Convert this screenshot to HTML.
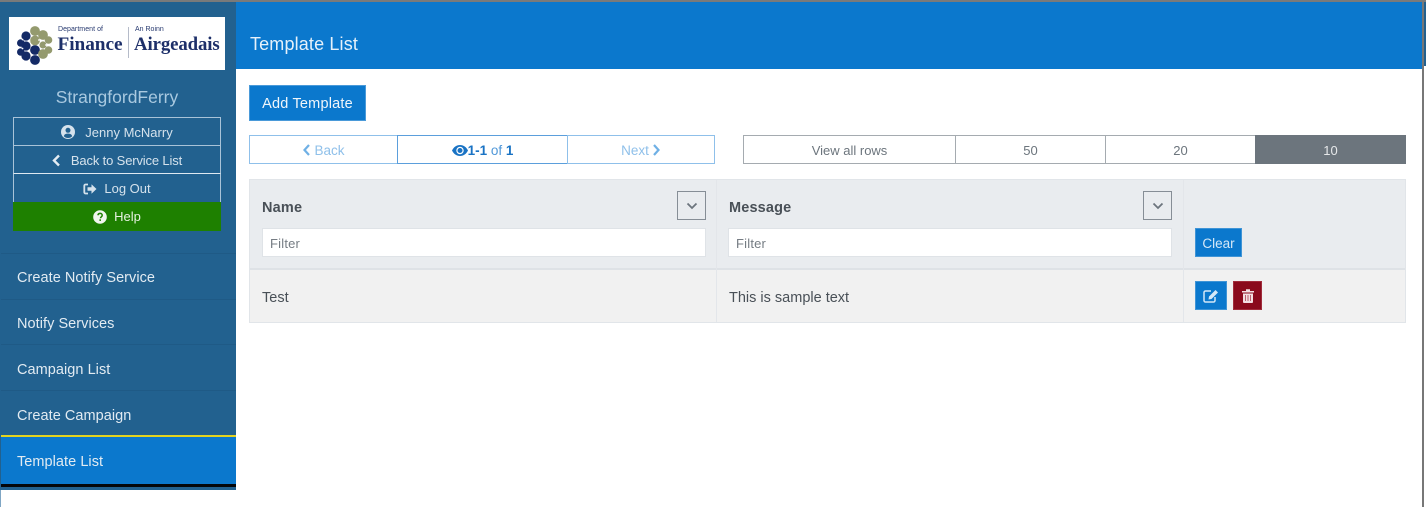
<!DOCTYPE html>
<html lang="en"><head><meta charset="utf-8"><title>Template List</title>
<style>
html,body{margin:0;padding:0;background:#fff}
body{width:1426px;height:507px;position:relative;overflow:hidden;font-family:"Liberation Sans",sans-serif;color:#495057}
.a{position:absolute;box-sizing:border-box}
.c{display:flex;align-items:center;justify-content:center;white-space:nowrap}
.t{position:absolute;white-space:nowrap;line-height:20px}
svg{display:block}
.sb{left:13px;width:208px;height:28px;border:1px solid #a9c3d8;color:#d5e2ec;font-size:13px;padding-top:1px}
.nav{left:17px;color:#e2ebf2;font-size:14.5px;letter-spacing:.05px}
.sep{left:1px;width:235px;height:1px;background:#1f5a86}
.pg{top:135px;height:29px;border:1px solid #8fc0ea;color:#8fc0ea;font-size:13.5px;background:#fff;padding-top:1px}
.rw{top:135px;height:29px;border:1px solid #a5abb0;color:#6c757d;font-size:13px;background:#fff;padding-top:1px}
.inp{background:#fff;border:1px solid #dfe3e7;height:29px;top:228px;color:#757c83;font-size:13px;padding:5px 0 0 7px;line-height:20px;letter-spacing:.2px}
.dd{top:191px;width:29px;height:29px;border:1px solid #868e96}
</style></head><body>

<!-- outer frame -->
<div class="a" style="left:0;top:0;width:1426px;height:2px;background:#7a7a7a"></div>
<div class="a" style="left:0;top:490px;width:1px;height:17px;background:#7fa6c4"></div>
<div class="a" style="left:1422px;top:2px;width:2px;height:505px;background:#777"></div>
<div class="a" style="left:1424px;top:2px;width:2px;height:64px;background:#22618f"></div>

<!-- sidebar -->
<div class="a" style="left:0;top:2px;width:236px;height:488px;background:#22618f"></div>
<div class="a" style="left:9px;top:17px;width:216px;height:53px;background:#fff"></div>
<svg class="a" style="left:17px;top:26px" width="36" height="39" viewBox="0 0 36 39">
<g fill="#142a66"><circle cx="9" cy="10" r="4.600"/><circle cx="3.800" cy="17" r="3.800"/><circle cx="9" cy="20" r="4.600"/><circle cx="3.800" cy="26" r="3.800"/><circle cx="9" cy="30" r="4.600"/><circle cx="18" cy="24" r="4.900"/><circle cx="18" cy="34" r="4.900"/></g>
<g fill="#949a6e"><circle cx="18" cy="5" r="4.900"/><circle cx="26" cy="9" r="4.900"/><circle cx="18" cy="14.500" r="4.900"/><circle cx="31.500" cy="14" r="3.800"/><circle cx="26" cy="19" r="3.600"/><circle cx="31.500" cy="24" r="3.800"/><circle cx="26" cy="28" r="4.900"/></g>
<g fill="#fff"><circle cx="5.500" cy="13.500" r=".9"/><circle cx="12.500" cy="15" r=".9"/><circle cx="5.500" cy="22.500" r=".9"/><circle cx="22" cy="14" r=".9"/><circle cx="29" cy="19" r=".9"/></g>
</svg>
<div class="t" style="left:58px;top:25px;font-size:7px;line-height:10px;color:#27396f;letter-spacing:.05px">Department of</div>
<div class="t" style="left:57.500px;top:33px;font:700 19.300px/24px 'Liberation Serif',serif;color:#1d2f69;letter-spacing:-.05px">Finance</div>
<div class="a" style="left:128px;top:27px;width:1px;height:31px;background:#b5bbc9"></div>
<div class="t" style="left:135px;top:25px;font-size:7px;line-height:10px;color:#27396f">An Roinn</div>
<div class="t" style="left:134px;top:33px;font:700 18.800px/24px 'Liberation Serif',serif;color:#1d2f69;letter-spacing:-.1px">Airgeadais</div>

<div class="t" style="left:0;width:234px;text-align:center;top:87px;font-size:17.500px;color:#a9c9e0">StrangfordFerry</div>

<div class="a sb c" style="top:117px;height:29px"><svg width="14" height="14" viewBox="0 0 14 14" style="margin-right:10px"><circle cx="7" cy="7" r="7" fill="#d5e2ec"/><circle cx="7" cy="5.300" r="2.500" fill="#22618f"/><path d="M2.800 11.200C3.500 9 5 8.600 7 8.600s3.500.4 4.200 2.600A6 6 0 0 1 7 13a6 6 0 0 1-4.200-1.800z" fill="#22618f"/></svg>Jenny McNarry</div>
<div class="a sb c" style="top:145px;height:29px;letter-spacing:-.15px"><svg width="9" height="13" viewBox="0 0 9 13" style="margin-right:10px"><path d="M7 1.500 2 6.500l5 5" fill="none" stroke="#e4ecf3" stroke-width="2.400"/></svg>Back to Service List</div>
<div class="a sb c" style="top:173px;height:30px;border-top-color:#dfe9f1"><svg width="14" height="12" viewBox="0 0 14 12" style="margin-right:7px"><path d="M5 1.500H2.500a1.200 1.200 0 0 0-1.200 1.200v6.600a1.200 1.200 0 0 0 1.200 1.200H5" fill="none" stroke="#d5e2ec" stroke-width="1.800"/><path d="M4.500 4.200H8.500V1.200L13.500 6 8.500 10.800V7.800H4.500z" fill="#d5e2ec"/></svg>Log Out</div>
<div class="a c" style="left:13px;top:202px;width:208px;height:29px;background:#1e8000;color:#e8f2e2;font-size:13px"><svg width="14" height="14" viewBox="0 0 14 14" style="margin-right:7px"><circle cx="7" cy="7" r="6.800" fill="#f1f6ee"/><path d="M4.900 5.300c.2-1.300 1.100-1.900 2.200-1.900 1.200 0 2.100.8 2.100 1.900 0 1.500-1.700 1.500-1.700 2.900" fill="none" stroke="#1e8000" stroke-width="1.500"/><rect x="6.400" y="9.300" width="1.600" height="1.600" fill="#1e8000"/></svg>Help</div>

<div class="a sep" style="top:253px"></div>
<div class="a sep" style="top:299px"></div>
<div class="a sep" style="top:344px"></div>
<div class="a sep" style="top:390px"></div>
<div class="t nav" style="top:268px">Create Notify Service</div>
<div class="t nav" style="top:314px">Notify Services</div>
<div class="t nav" style="top:360px">Campaign List</div>
<div class="t nav" style="top:406px">Create Campaign</div>
<div class="a" style="left:1px;top:435px;width:235px;height:2px;background:#e3d31f"></div>
<div class="a" style="left:1px;top:437px;width:235px;height:47px;background:#0b78cd"></div>
<div class="t nav" style="top:452px">Template List</div>
<div class="a" style="left:1px;top:484px;width:235px;height:3px;background:#04060a"></div>

<!-- header -->
<div class="a" style="left:236px;top:2px;width:1186px;height:67px;background:#0b78cd"></div>
<div class="t" style="left:250px;top:34px;font-size:18px;color:#e6f1fa;letter-spacing:.15px">Template List</div>

<!-- add -->
<div class="a c" style="left:249px;top:85px;width:117px;height:36px;background:#0b78cd;border:1px solid #4a9ad9;color:#f0f6fb;font-size:14.500px;letter-spacing:.2px;padding-top:2px">Add Template</div>

<!-- pager -->
<div class="a pg c" style="left:249px;width:149px"><svg width="9" height="12" viewBox="0 0 9 12" style="margin-right:3px"><path d="M7 1 2.500 6 7 11" fill="none" stroke="#6fb0e5" stroke-width="2.200"/></svg>Back</div>
<div class="a pg c" style="left:397px;width:171px;border-color:#5b9fdc;color:#4f97d8"><svg width="16" height="11" viewBox="0 0 16 11"><path d="M8 0C4.500 0 1.600 2.200 0 5.500 1.600 8.800 4.500 11 8 11s6.400-2.200 8-5.500C14.400 2.200 11.500 0 8 0z" fill="#1a73c4"/><circle cx="8" cy="5.500" r="3.700" fill="#fff"/><circle cx="8" cy="5.500" r="2.500" fill="#1a73c4"/></svg><b style="color:#1a73c4">1-1</b>&nbsp;of&nbsp;<b style="color:#1a73c4">1</b></div>
<div class="a pg c" style="left:567px;width:148px">Next<svg width="9" height="12" viewBox="0 0 9 12" style="margin-left:3px"><path d="M2 1 6.500 6 2 11" fill="none" stroke="#6fb0e5" stroke-width="2.200"/></svg></div>

<!-- rows -->
<div class="a rw c" style="left:743px;width:213px">View all rows</div>
<div class="a rw c" style="left:955px;width:151px">50</div>
<div class="a rw c" style="left:1105px;width:151px">20</div>
<div class="a rw c" style="left:1255px;width:151px;background:#6c757d;border-color:#6c757d;color:#e6e8ea">10</div>

<!-- table -->
<div class="a" style="left:249px;top:179px;width:1157px;height:144px;background:#e9ecef;border:1px solid #e1e5e9"></div>
<div class="a" style="left:250px;top:270px;width:1155px;height:52px;background:#f1f1f1"></div>
<div class="a" style="left:250px;top:268px;width:1155px;height:2px;background:#dee2e6"></div>
<div class="a" style="left:716px;top:180px;width:1px;height:142px;background:#e3e6ea"></div>
<div class="a" style="left:1183px;top:180px;width:1px;height:142px;background:#e3e6ea"></div>

<div class="t" style="left:262px;top:198px;font-size:14.500px;font-weight:700;color:#495057;letter-spacing:.2px">Name</div>
<div class="t" style="left:729px;top:198px;font-size:14.500px;font-weight:700;color:#495057;letter-spacing:.15px">Message</div>

<div class="a dd c" style="left:677px"><svg width="12" height="8" viewBox="0 0 12 8"><path d="M1.500 1.500 6 6l4.500-4.500" fill="none" stroke="#6c757d" stroke-width="1.800"/></svg></div>
<div class="a dd c" style="left:1143px"><svg width="12" height="8" viewBox="0 0 12 8"><path d="M1.500 1.500 6 6l4.500-4.500" fill="none" stroke="#6c757d" stroke-width="1.800"/></svg></div>

<div class="a inp" style="left:262px;width:444px">Filter</div>
<div class="a inp" style="left:728px;width:444px">Filter</div>
<div class="a c" style="left:1195px;top:228px;width:47px;height:29px;background:#0b78cd;border:1px solid #3f94d6;color:#d6e8f7;font-size:13.500px;padding-top:1px">Clear</div>

<div class="t" style="left:262px;top:288px;font-size:14.500px;color:#495057;letter-spacing:0">Test</div>
<div class="t" style="left:729px;top:288px;font-size:14.500px;color:#495057;letter-spacing:0">This is sample text</div>

<div class="a c" style="left:1195px;top:281px;width:32px;height:29px;background:#0b78cd;border:1px solid #3f94d6"><svg width="16" height="14" viewBox="0 0 16 14"><path d="M12 8v3.500a1.500 1.500 0 0 1-1.500 1.500h-8A1.500 1.500 0 0 1 1 11.500v-8A1.500 1.500 0 0 1 2.500 2H8" fill="none" stroke="#d5e8f8" stroke-width="1.500"/><path d="M6 7.500 12.500 1 15 3.500 8.500 10 5.500 10.500z" fill="#d5e8f8"/></svg></div>
<div class="a c" style="left:1233px;top:281px;width:29px;height:29px;background:#8a0a1c;border:1px solid #a02c3b"><svg width="12" height="14" viewBox="0 0 12 14"><path d="M0 2h12v1.500H0zM4 .3h4V2H4z" fill="#f3dfe2"/><path d="M1 4.500h10V13a1 1 0 0 1-1 1H2a1 1 0 0 1-1-1z" fill="#f3dfe2"/><path d="M3.500 6v6M6 6v6M8.500 6v6" stroke="#b9626f" stroke-width="1"/></svg></div>

</body></html>
